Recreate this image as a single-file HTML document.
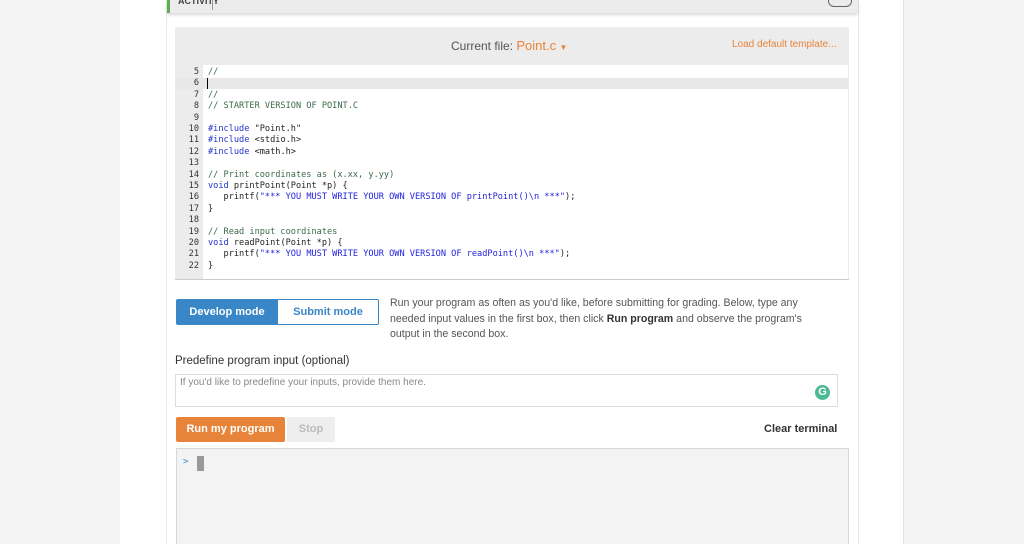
<!DOCTYPE html>
<html style="overflow:hidden;height:544px"><head><style>
*{box-sizing:border-box;margin:0;padding:0}
body{width:1024px;height:544px;overflow:hidden;background:#f3f3f3;font-family:"Liberation Sans",sans-serif;position:relative}
.a{position:absolute}
.mono{font-family:"DejaVu Sans Mono","Liberation Mono",monospace;font-size:8.6px;color:#222;white-space:pre}
.ln{position:absolute;left:0;width:28px;text-align:right;padding-right:4px;font-family:"DejaVu Sans Mono",monospace;font-size:8.6px;color:#333}
.cl{position:absolute;left:33px}
.k{color:#2233cc}.c{color:#3a6a4a}.s{color:#2222dd}
</style></head><body>
<div class="a" style="left:120px;top:0;width:784px;height:544px;background:#fff;border-right:1px solid #e4e4e4"></div>
<div class="a" style="left:166px;top:0;width:693px;height:544px;background:#fff;border-left:1px solid #e8e8e8;border-right:1px solid #e8e8e8"></div>
<div class="a" style="left:167px;top:0;width:691px;height:13px;background:#ececec;box-shadow:0 2px 3px rgba(0,0,0,.15)"></div>
<div class="a" style="left:167px;top:0;width:3px;height:13px;background:#5cae4f"></div>
<div class="a" style="left:178px;top:-4px;font-size:9px;color:#444;font-weight:bold">ACTIVITY</div>
<div class="a" style="left:212px;top:0;width:1px;height:10px;background:#999"></div>
<div class="a" style="left:828px;top:0;width:24px;height:7px;border:1px solid #666;border-top:none;border-radius:0 0 6px 6px"></div>

<div class="a" style="left:175px;top:27px;width:674px;height:253px;background:#ececec;border-bottom:1px solid #ccc"></div>
<div class="a" style="left:451px;top:38px;font-size:12px;color:#555">Current file: <span style="color:#e8843a;font-size:13px">Point.c</span> <span style="color:#e8843a;font-size:8px">&#9660;</span></div>
<div class="a" style="left:732px;top:39px;font-size:10px;color:#e8843a">Load default template...</div>
<div class="a" style="left:203px;top:65px;width:645px;height:214px;background:#fff"></div>
<div class="a" style="left:175px;top:78px;width:673px;height:11px;background:#e8e8e8"></div>
<div class="a" style="left:207px;top:78px;width:1px;height:11px;background:#000"></div>
<div class="a" style="left:175px;top:65px;width:673px;height:214px">
<div class="mono" style="position:relative">
<div class="ln" style="top:2px">5</div><div class="cl c" style="top:2px">//</div>
<div class="ln" style="top:13px">6</div>
<div class="ln" style="top:25px">7</div><div class="cl c" style="top:25px">//</div>
<div class="ln" style="top:36px">8</div><div class="cl c" style="top:36px">// STARTER VERSION OF POINT.C</div>
<div class="ln" style="top:48px">9</div>
<div class="ln" style="top:59px">10</div><div class="cl" style="top:59px"><span class="k">#include</span> "Point.h"</div>
<div class="ln" style="top:70px">11</div><div class="cl" style="top:70px"><span class="k">#include</span> &lt;stdio.h&gt;</div>
<div class="ln" style="top:82px">12</div><div class="cl" style="top:82px"><span class="k">#include</span> &lt;math.h&gt;</div>
<div class="ln" style="top:93px">13</div>
<div class="ln" style="top:105px">14</div><div class="cl c" style="top:105px">// Print coordinates as (x.xx, y.yy)</div>
<div class="ln" style="top:116px">15</div><div class="cl" style="top:116px"><span class="k">void</span> printPoint(Point *p) {</div>
<div class="ln" style="top:127px">16</div><div class="cl" style="top:127px">   printf(<span class="s">"*** YOU MUST WRITE YOUR OWN VERSION OF printPoint()\n ***"</span>);</div>
<div class="ln" style="top:139px">17</div><div class="cl" style="top:139px">}</div>
<div class="ln" style="top:150px">18</div>
<div class="ln" style="top:162px">19</div><div class="cl c" style="top:162px">// Read input coordinates</div>
<div class="ln" style="top:173px">20</div><div class="cl" style="top:173px"><span class="k">void</span> readPoint(Point *p) {</div>
<div class="ln" style="top:184px">21</div><div class="cl" style="top:184px">   printf(<span class="s">"*** YOU MUST WRITE YOUR OWN VERSION OF readPoint()\n ***"</span>);</div>
<div class="ln" style="top:196px">22</div><div class="cl" style="top:196px">}</div>
</div></div>

<div class="a" style="left:176px;top:299px;width:102px;height:26px;background:#3a87c8;border-radius:2px 0 0 2px;color:#fff;font-size:11px;font-weight:bold;text-align:center;line-height:26px">Develop mode</div>
<div class="a" style="left:277px;top:299px;width:102px;height:26px;background:#fff;border:1px solid #3a87c8;border-radius:0 2px 2px 0;color:#3a87c8;font-size:11px;font-weight:bold;text-align:center;line-height:24px">Submit mode</div>
<div class="a" style="left:390px;top:296px;width:440px;font-size:10.6px;line-height:15.5px;color:#555">Run your program as often as you'd like, before submitting for grading. Below, type any needed input values in the first box, then click <b style="color:#333">Run program</b> and observe the program's output in the second box.</div>
<div class="a" style="left:175px;top:355px;font-size:11.5px;color:#333">Predefine program input (optional)</div>
<div class="a" style="left:175px;top:374px;width:663px;height:33px;border:1px solid #ddd;background:#fff"></div>
<div class="a" style="left:180px;top:377px;font-size:10px;color:#888">If you'd like to predefine your inputs, provide them here.</div>
<div class="a" style="left:815px;top:385px;width:15px;height:15px;border-radius:50%;background:#4cb894;color:#fff;font-size:11px;font-weight:bold;text-align:center;line-height:15px">G</div>
<div class="a" style="left:176px;top:417px;width:109px;height:25px;background:#e8843a;border-radius:2px;color:#fff;font-size:11px;font-weight:bold;text-align:center;line-height:25px">Run my program</div>
<div class="a" style="left:287px;top:417px;width:48px;height:25px;background:#eee;color:#bbb;font-size:11px;font-weight:bold;text-align:center;line-height:25px">Stop</div>
<div class="a" style="left:764px;top:423px;font-size:11px;font-weight:bold;color:#333">Clear terminal</div>
<div class="a" style="left:176px;top:448px;width:673px;height:96px;background:#f3f3f3;border:1px solid #d4d8dc;border-bottom:none"></div>
<div class="a" style="left:183px;top:457px;font-size:9px;color:#3a87c8;font-family:monospace">&gt;</div>
<div class="a" style="left:197px;top:456px;width:7px;height:15px;background:#999"></div>
</body></html>
